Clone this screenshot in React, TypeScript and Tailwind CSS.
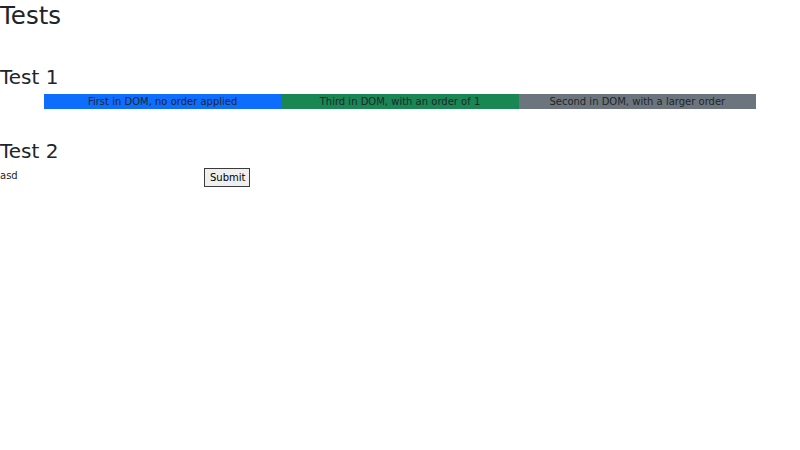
export default function App() {
  const items = [
    { label: "First in DOM, no order applied", color: "bg-[#0d6efd]" },
    { label: "Third in DOM, with an order of 1", color: "bg-[#198754]" },
    { label: "Second in DOM, with a larger order", color: "bg-[#6c757d]" },
  ];

  return (
    <div className="min-h-screen bg-white text-[#212529] font-['DejaVu_Sans',sans-serif]">
      <h1 className="pt-[2px] text-[24.5px] leading-[28px] font-normal">Tests</h1>

      {/* Test 1 */}
      <h2 className="mt-[36px] text-[20px] leading-[23px] font-normal">Test 1</h2>
      <div className="mt-[5px] px-[44px]">
        <div className="flex">
          {items.map((item) => (
            <div
              key={item.label}
              className={`flex-1 text-center text-[10px] leading-[15px] ${item.color}`}
            >
              {item.label}
            </div>
          ))}
        </div>
      </div>

      {/* Test 2 */}
      <h2 className="mt-[31px] text-[20px] leading-[23px] font-normal">Test 2</h2>
      <form className="mt-[5px] flex items-start" onSubmit={(e) => e.preventDefault()}>
        <span className="w-[204px] text-[10px] leading-[15px]">asd</span>
        <button
          type="submit"
          className="border border-[#3b3b3b] bg-[#efefef] pl-[5px] pr-[4px] py-[1px] text-[10px] leading-[15px] text-black"
        >
          Submit
        </button>
      </form>
    </div>
  );
}
